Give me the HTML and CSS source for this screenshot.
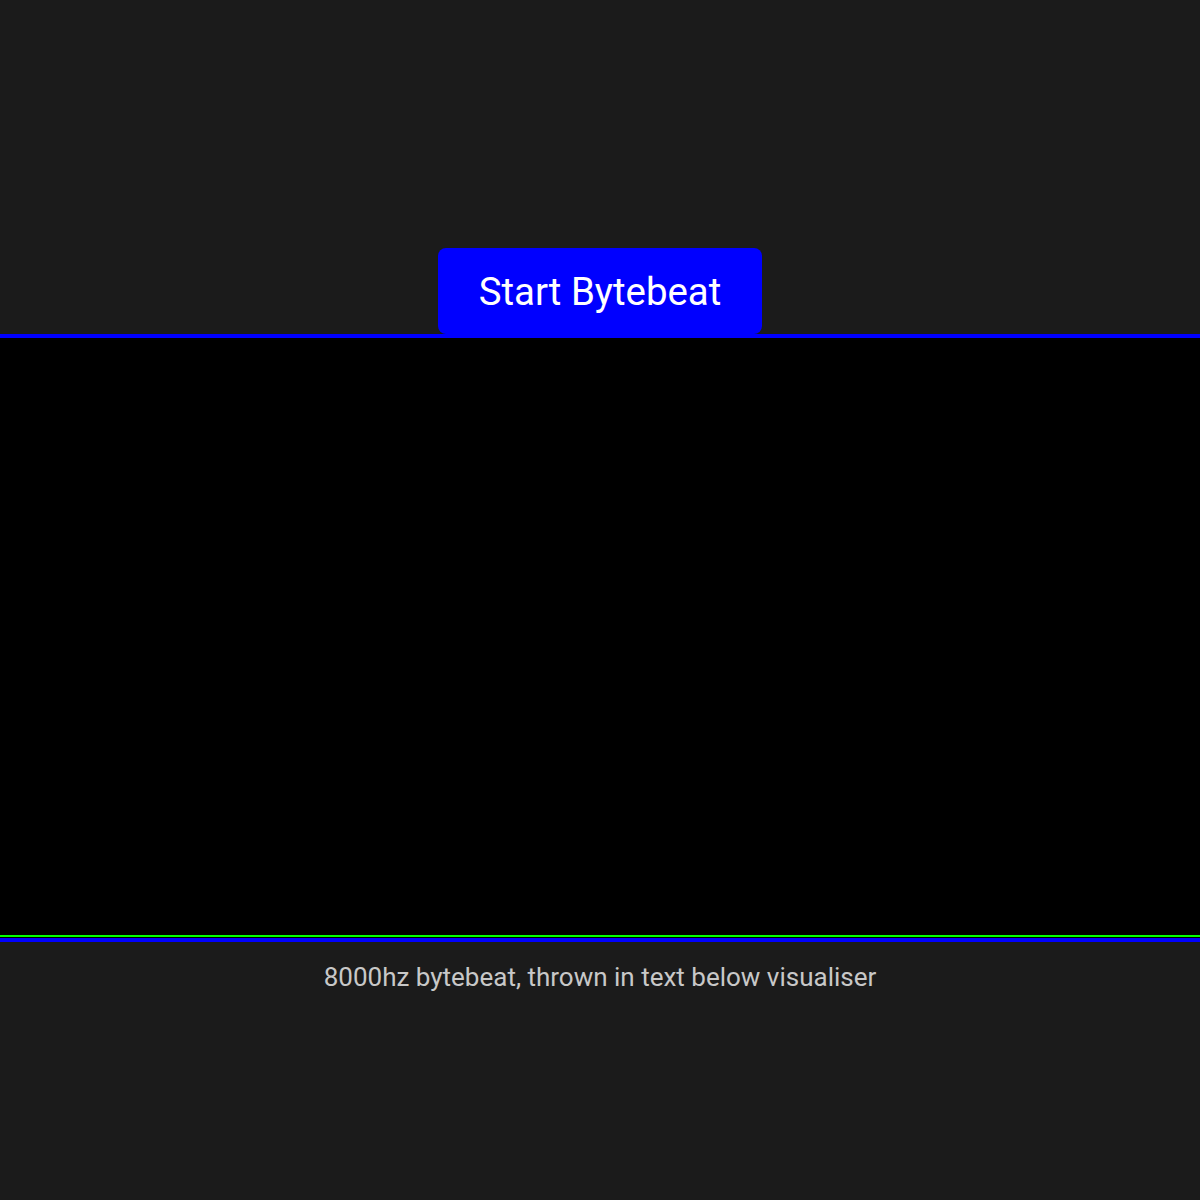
FILE: index.html
```html
<!DOCTYPE html>
<html>
<head>
<meta charset="utf-8">
<link rel="stylesheet" href="styles.css">
</head>
<body>
<main class="page">
  <button class="start-btn">Start Bytebeat</button>
  <div class="visualiser"><div class="wave"></div></div>
  <p class="caption">8000hz bytebeat, thrown in text below visualiser</p>
</main>
</body>
</html>
```
FILE: styles.css
```css
html, body {
  margin: 0;
  padding: 0;
  background: #1b1b1b;
  font-family: Roboto, "Liberation Sans", sans-serif;
}
.page {
  display: flex;
  flex-direction: column;
  align-items: center;
  padding-top: 248px;
}
.start-btn {
  width: 324px;
  height: 86px;
  background: #0000ff;
  color: #fff;
  border: none;
  border-radius: 8px;
  font-family: Roboto, "Liberation Sans", sans-serif;
  font-size: 38.4px;
  padding: 0;
  cursor: pointer;
}
.visualiser {
  width: 100%;
  height: 600px;
  background: #000;
  border-top: 4px solid #0000ff;
  border-bottom: 4px solid #0000ff;
  display: flex;
  flex-direction: column;
  justify-content: flex-end;
}
.wave {
  height: 2px;
  margin-bottom: 1px;
  background: #00ff00;
}
.caption {
  margin: 20px 0 0;
  font-size: 26px;
  color: #c8c8c8;
  line-height: 30px;
}
```
